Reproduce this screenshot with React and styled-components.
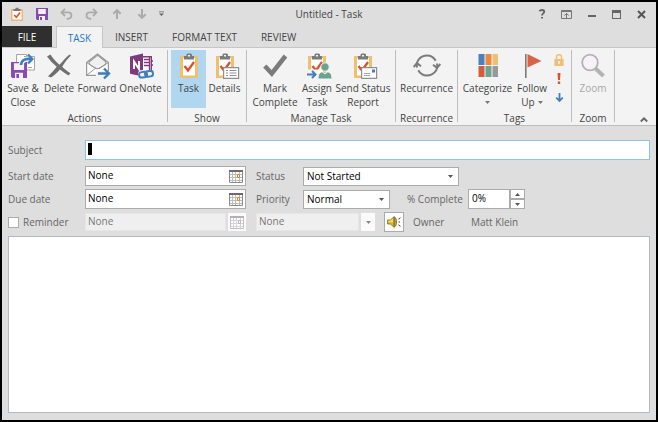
import React from "react";
import styled, { createGlobalStyle, css } from "styled-components";

const Global = createGlobalStyle`
  *, *::before, *::after { box-sizing: border-box; }
  body { margin: 0; background: #000; }
  body, button, input, select, textarea {
    font-family: "Open Sans", "Noto Sans", sans-serif;
    font-size: 10px;
    line-height: 14px;
    color: #444;
  }
  button, input, select, textarea { margin: 0; padding: 0; border-radius: 0; outline: none; }
  button { border: 0; background: transparent; }
  svg { display: block; flex: none; overflow: visible; }
`;

/* ---------- window frame ---------- */

const Window = styled.div`
  min-height: 100vh;
  display: flex;
  flex-direction: column;
  border: 2px solid #000;
  background: #dedede;
`;

const TitleBar = styled.header`
  display: grid;
  grid-template-columns: 1fr auto 1fr;
  align-items: center;
  height: 24px;
  padding: 0 2px;
`;

const Title = styled.h1`
  margin: 0;
  font-size: 10px;
  font-weight: 400;
  color: #444;
`;

const BarButtons = styled.div`
  display: flex;
  justify-content: ${(p) => (p.$end ? "flex-end" : "flex-start")};
`;

const BarButton = styled.button`
  width: ${(p) => (p.$narrow ? "14px" : "25px")};
  height: 24px;
  display: grid;
  place-items: center;
`;

/* ---------- tabs ---------- */

const Tabs = styled.nav`
  display: flex;
  height: 21px;
`;

const Tab = styled.button`
  height: 21px;
  padding: 0 12px;
  color: #444;
  ${(p) =>
    p.$kind === "file" &&
    css`
      width: 50px;
      padding: 0;
      margin-right: 4px;
      background: #2f2f2f;
      color: #fff;
    `}
  ${(p) =>
    p.$kind === "active" &&
    css`
      position: relative;
      width: 47px;
      padding: 0;
      height: 22px;
      background: #f3f3f3;
      border: 1px solid #c6c6c6;
      border-bottom: 0;
      color: #1979ca;
    `}
`;

/* ---------- ribbon ---------- */

const Ribbon = styled.section`
  display: flex;
  height: 79px;
  padding: 2px 0 3px;
  background: #f3f3f3;
  border-top: 1px solid #c6c6c6;
  border-bottom: 1px solid #bdbdbd;
`;

const Group = styled.div`
  display: flex;
  flex-direction: column;
  justify-content: space-between;
  padding: 0 3px;
  border-right: 1px solid #bdbdbd;
`;

const GroupItems = styled.div`
  display: flex;
`;

const GroupName = styled.div`
  text-align: center;
  line-height: 8px;
`;

const BigButton = styled.button`
  width: ${(p) => p.$w}px;
  height: 58px;
  padding-top: 3px;
  display: flex;
  flex-direction: column;
  align-items: center;
  line-height: 14px;
  white-space: nowrap;
  background: ${(p) => (p.$on ? "#b1d6f0" : "transparent")};
  &:disabled { color: #a8a8a8; }
`;

const BigLabel = styled.span`
  margin-top: 2px;
  display: flex;
  flex-direction: column;
  align-items: center;
`;

const LabelLine = styled.span`
  display: flex;
  align-items: center;
  gap: 3px;
  min-height: 14px;
`;

const SmallStack = styled.div`
  display: flex;
  flex-direction: column;
  width: 18px;
`;

const SmallButton = styled.button`
  height: 19px;
  display: grid;
  place-items: center;
`;

const RibbonEnd = styled.div`
  flex: 1;
  display: flex;
  align-items: flex-end;
  justify-content: flex-end;
  padding: 0 8px 0 0;
`;

/* ---------- form ---------- */

const Form = styled.form`
  flex: 1;
  display: flex;
  flex-direction: column;
  padding: 14px 6px 7px;
`;

const Row = styled.div`
  display: flex;
  align-items: center;
  height: 20px;
  margin-bottom: ${(p) => p.$gap || 3}px;
`;

const Label = styled.label`
  flex: none;
  width: ${(p) => p.$w}px;
  margin-left: ${(p) => p.$ml || 0}px;
  color: #666;
  white-space: nowrap;
`;

const Value = styled.output`
  color: #666;
`;

const SubjectBox = styled.div`
  flex: 1;
  display: flex;
  align-items: center;
  height: 20px;
  padding-left: 2px;
  background: #fff;
  border: 1px solid #92c0e0;
`;

const Caret = styled.span`
  width: 4px;
  height: 12px;
  margin-bottom: 2px;
  background: #000;
`;

const SubjectInput = styled.input`
  flex: 1;
  min-width: 0;
  height: 18px;
  border: 0;
  color: #000;
  background: transparent;
`;

const DateBox = styled.div`
  width: 161px;
  height: 20px;
  display: flex;
  background: #fff;
  border: 1px solid #ababab;
`;

const DateInput = styled.input`
  flex: 1;
  min-width: 0;
  border: 0;
  padding: 0 0 2px 2px;
  color: #000;
  background: transparent;
  &:disabled { color: #777; }
`;

const PickButton = styled.button`
  width: ${(p) => p.$w || 18}px;
  display: grid;
  place-items: center;
  &:disabled { background: #fbfbfb; }
`;

const MutedBox = styled(DateBox)`
  width: ${(p) => p.$w}px;
  height: 18px;
  margin-left: ${(p) => p.$ml || 0}px;
  gap: 2px;
  background: transparent;
  border: 0;

  ${DateInput} {
    background: #efefef;
    border: 1px solid #e6e6e6;
  }
`;

const SelectBox = styled.div`
  width: ${(p) => p.$w}px;
  height: 19px;
  display: grid;
  align-items: center;
  background: #fff;
  border: 1px solid #ababab;

  > * { grid-area: 1 / 1; }
  > svg { justify-self: end; margin-right: 5px; pointer-events: none; }
`;

const Select = styled.select`
  appearance: none;
  width: 100%;
  height: 17px;
  padding: 0 14px 0 3px;
  border: 0;
  color: #000;
  background: transparent;
`;

const Spinner = styled.div`
  display: flex;
  height: 20px;
  width: 57px;
`;

const SpinInput = styled.input`
  width: 42px;
  padding: 0 0 2px 3px;
  border: 1px solid #ababab;
  color: #000;
  background: #fff;
`;

const SpinButtons = styled.div`
  flex: 1;
  display: flex;
  flex-direction: column;
`;

const SpinButton = styled.button`
  flex: 1;
  display: grid;
  place-items: center;
  background: #fff;
  border: 1px solid #ababab;
`;

const Check = styled.input`
  appearance: none;
  width: 11px;
  height: 11px;
  margin-right: 4px;
  background: #fff;
  border: 1px solid #ababab;
`;

const SoundButton = styled.button`
  width: 20px;
  height: 20px;
  margin-left: 9px;
  display: grid;
  place-items: center;
  background: #fff;
  border: 1px solid #ababab;
`;

const Notes = styled.textarea`
  flex: 1;
  width: 100%;
  min-height: 120px;
  padding: 4px;
  resize: none;
  color: #000;
  background: #fff;
  border: 1px solid #b4bac1;
`;

/* ---------- icons ---------- */

const Floppy = ({ size = 12, x, y }) => (
  <svg width={size} height={size} x={x} y={y} viewBox="0 0 12 12">
    <path fill="#8a4bb0" d="M0 0h12v12H1L0 11z" />
    <path fill="#f6f2f9" d="M2.200 1h7.600v5H2.200zM3 8h6v4H3z" />
    <path fill="#8a4bb0" d="M4 9h2v3H4z" />
  </svg>
);

const MiniTask = () => (
  <svg width="12" height="14" viewBox="0 0 12 14">
    <path fill="#efb96d" d="M0 2h12v12H0z" />
    <path fill="#fff" d="M1.500 4h9v8.500h-9z" />
    <path fill="#777" d="M2.500 2h2V.8h3V2h2v2h-7z" />
    <path fill="none" stroke="#d9512c" strokeWidth="1.600" d="M3.200 8l2.100 2.200L9 5.500" />
  </svg>
);

const Undo = ({ flip }) => (
  <svg width="13" height="12" viewBox="0 0 13 12" fill="none" stroke="#ababab" strokeWidth="1.800">
    <g transform={flip ? "translate(13 0) scale(-1 1)" : undefined}>
      <path d="M5 .8L1.400 4.400 5 8M1.800 4.400h6.400c4.300 0 4.300 5.800.2 6.300L6.800 11" />
    </g>
  </svg>
);

const Arrow = ({ up, color = "#ababab", size = 10 }) => (
  <svg width={size} height={size} viewBox="0 0 11 11" fill="none" stroke={color} strokeWidth="2.200">
    <path d={up ? "M5.500 11V1.500M1.500 5.300l4-4 4 4" : "M5.500 0v9.500M1.500 5.700l4 4 4-4"} />
  </svg>
);

const Customize = () => (
  <svg width="5" height="6" viewBox="0 0 6 6" fill="#666">
    <path d="M0 0h6v1H0zM0 2.500h6L3 5.500z" />
  </svg>
);

const Tri = ({ up, color = "#555" }) => (
  <svg width="5" height="3" viewBox="0 0 5 3" fill={color}>
    <path d={up ? "M0 3h5L2.500 0z" : "M0 0h5L2.500 3z"} />
  </svg>
);

const Help = () => (
  <svg width="8" height="10" viewBox="0 0 8 10" fill="none" stroke="#666" strokeWidth="1.900">
    <path d="M1.400 2.200C2.400.6 6.200.4 6.200 2.800 6.200 4.400 4 4.400 4 6.600M4 7.900v1.700" />
  </svg>
);

const RibbonOptions = () => (
  <svg width="11" height="9" viewBox="0 0 11 9" fill="none" stroke="#777">
    <path d="M.5.5h10v8H.5zM.5 1.500h10M5.500 8V3.500M3.300 5.600l2.200-2.200 2.200 2.200" />
  </svg>
);

const Minimize = () => (
  <svg width="8" height="8" viewBox="0 0 8 8">
    <path fill="#666" d="M0 5h8v2H0z" />
  </svg>
);

const Maximize = () => (
  <svg width="9" height="9" viewBox="0 0 9 9">
    <path fill="#666" d="M0 0h9v9H0zM1 3v5h7V3z" fillRule="evenodd" />
  </svg>
);

const Close = () => (
  <svg width="9" height="9" viewBox="0 0 9 9" stroke="#555" strokeWidth="2">
    <path d="M1 1l7 7M8 1L1 8" />
  </svg>
);

const SaveClose = () => (
  <svg width="26" height="26" viewBox="0 0 26 26">
    <path fill="#fff" stroke="#a6a6a6" d="M6.500 1.500h10v16h-10zM14 3.500h10.500v13.500H14" />
    <path stroke="#a6a6a6" d="M18 14.500h4" />
    <Floppy size={16} x={1} y={9} />
    <path fill="none" stroke="#fff" strokeWidth="5" d="M11 11c1-4 4-5.500 10-5" />
    <path fill="none" stroke="#3f7fbf" strokeWidth="2.600" d="M11 12c.4-5 4-6.700 11-6" />
    <path fill="none" stroke="#3f7fbf" strokeWidth="2.400" d="M18 1.500L22.300 6 18 10.500" />
  </svg>
);

const DeleteIcon = () => (
  <svg width="26" height="26" viewBox="0 0 26 26" fill="#6f6f6f">
    <path d="M1 3.500L4.500 1.500C7 5.500 10 9 13.500 11.800 17 8 20 4.500 23.500 1.500L25 2.600C21.500 6 18.500 9.800 16.200 13.700 18.500 16 21 18 24.500 20.300L22.500 22.500C19.200 20.500 16.400 18.400 14 16.400 11.300 19.300 8.500 22 5 24.500L2 23.300C5.200 20.200 8 17.300 10.700 13.800 7 10.500 4 7.500 1 3.500z" />
  </svg>
);

const ForwardIcon = () => (
  <svg width="26" height="26" viewBox="-1 0 26 26">
    <path fill="#fff" stroke="#979797" strokeWidth="1.200" d="M1.600 9.500L12.500 1l10.900 8.500v12.900H1.600z" />
    <path fill="#f0f0f0" stroke="#979797" strokeWidth="1.100" d="M4 9l8-6.500h1L21 9l-.5 2.500L14 15.500h-3L4.500 11.500z" />
    <path fill="none" stroke="#979797" d="M1.600 9.500L11 15.600h3l9.400-6.100M1.600 22.300l8.900-7" />
    <path fill="none" stroke="#f3f3f3" strokeWidth="5" d="M11 20.500h13" />
    <path fill="none" stroke="#3f7fbf" strokeWidth="2.400" d="M13 20.500h11M19 15.500l5 5-5 5" />
  </svg>
);

const OneNoteIcon = () => (
  <svg width="26" height="26" viewBox="-1 0 26 26">
    <path fill="#fff" stroke="#80397b" strokeWidth="1.400" d="M13 3.700h9.300V19H13z" />
    <path stroke="#80397b" strokeWidth="1.300" d="M15 6.500h5M15 9.500h5M15 12.500h5M20.500 4v14M22.500 8H24M22.500 12H24" />
    <path fill="#80397b" d="M1 3.500L14 .5v23L1 20.700z" />
    <path fill="none" stroke="#fff" strokeWidth="1.900" d="M5 16V8.500L10 16V8" />
    <rect x="9" y="17" width="16" height="9" rx="4" fill="#f3f3f3" />
    <g fill="none" stroke="#3f7fbf" strokeWidth="2" transform="rotate(-8 17 21)">
      <rect x="10" y="18.500" width="8" height="5.500" rx="2.700" />
      <rect x="16" y="18.500" width="8" height="5.500" rx="2.700" />
    </g>
  </svg>
);

const ClipboardShape = () => (
  <>
    <path fill="#f0c06f" d="M4 3h18v22H4z" />
    <path fill="#fff" d="M7 5h12v17.500H7z" />
    <path fill="#7b7b7b" d="M8 3h2.500V1.500L11.500.500h3.500l1 1V3h2v3.500H8z" />
    <path fill="#f3f3f3" d="M12 2h2v1.500h-2z" />
    <path fill="none" stroke="#d9512c" strokeWidth="2.300" d="M8.500 13l3.500 4.500 6-8.500" />
  </>
);

const TaskIcon = () => (
  <svg width="26" height="26" viewBox="0 0 26 26"><ClipboardShape /></svg>
);

const DetailsIcon = () => (
  <svg width="26" height="26" viewBox="-2 0 26 26">
    <g transform="translate(-2 0)"><ClipboardShape /></g>
    <path fill="#fff" stroke="#8f8f8f" strokeWidth="1.200" d="M9.600 14.600h15v10.800h-15z" />
    <path stroke="#929292" d="M12 17.500h2M15.500 17.500h7M12 20h2M15.500 20h7M12 22.500h2M15.500 22.500h7" />
  </svg>
);

const CheckIcon = () => (
  <svg width="26" height="26" viewBox="0 0 26 26">
    <path fill="none" stroke="#7b7b7b" strokeWidth="4.500" d="M2.800 13l7 7.500L23.500 3" />
  </svg>
);

const AssignIcon = () => (
  <svg width="26" height="26" viewBox="-2 0 26 26">
    <g transform="translate(-2 0)"><ClipboardShape /></g>
    <path fill="#f3f3f3" d="M0 16.500h12V26H0z" />
    <g fill="#68a490" stroke="#f3f3f3">
      <circle cx="19" cy="14" r="4.200" />
      <path d="M12 26c0-5 2-7 4.500-7l2.500 2 2.500-2c2.500 0 4.500 2 4.500 7z" />
    </g>
    <path fill="none" stroke="#3f7fbf" strokeWidth="2" d="M1 21.500h8M6 18l3.500 3.500L6 25" />
  </svg>
);

const SendIcon = () => (
  <svg width="26" height="26" viewBox="-2 0 26 26">
    <g transform="translate(-2 0)"><ClipboardShape /></g>
    <path fill="#fff" stroke="#8f8f8f" strokeWidth="1.200" d="M9.600 14.600h15v10.800h-15z" />
    <path fill="#3f7fbf" d="M20 16.500h3v3h-3z" />
    <path stroke="#a5a5a5" d="M12 20.500h6M12 22.500h6" />
  </svg>
);

const RecurrenceIcon = () => (
  <svg width="26" height="26" viewBox="0 0 26 26" fill="none" stroke="#7b7b7b" strokeWidth="2">
    <path d="M3 14.500C1.500 7.500 7 2.500 13 2.500c4 0 7 2 8.700 5.200M23 10.500C24.500 17.500 19 22.500 13 22.500c-4 0-7-2-8.700-5.200" />
    <path d="M-.3 14l3.300-3.800 4 3M26.300 11L23 14.800l-4-3" />
  </svg>
);

const CategorizeIcon = () => (
  <svg width="26" height="26" viewBox="0 0 26 26">
    <path fill="#4a80bd" d="M3.500 1h6v11h-6z" />
    <path fill="#ec8840" d="M10.500 1h6v11h-6z" />
    <path fill="#eebf74" d="M17.500 1h5.500v11h-5.500z" />
    <path fill="#d65c3f" d="M3.500 13h6v11h-6z" />
    <path fill="#6ba592" d="M10.500 13h6v11h-6z" />
    <path fill="#999" d="M17.500 13h5.500v11h-5.500z" />
  </svg>
);

const FlagIcon = () => (
  <svg width="26" height="26" viewBox="0 0 26 26">
    <path fill="#7b7b7b" d="M6 1h1.600v24H6z" />
    <path fill="#dc6245" d="M8.500 1l14 7-14 6.500z" />
  </svg>
);

const LockIcon = () => (
  <svg width="10" height="12" viewBox="0 0 10 13">
    <path fill="none" stroke="#eebf74" strokeWidth="1.600" d="M2.300 6V3c0-3 5.400-3 5.400 0v3" />
    <path fill="#eebf74" d="M0 5.500h10V13H0z" />
    <path fill="#fff" d="M4.200 7.500h1.600v3H4.200z" />
  </svg>
);

const ImportantIcon = () => (
  <svg width="4" height="11" viewBox="0 0 4 11" fill="#dc5334">
    <path d="M.5 0h3L3 7H1zM.8 8.500h2.400V11H.8z" />
  </svg>
);

const ZoomIcon = () => (
  <svg width="26" height="26" viewBox="0 0 26 26">
    <path stroke="#b3b3b3" strokeWidth="4" d="M15.500 15.500l8 7.500" />
    <circle cx="10" cy="9.500" r="7.800" fill="#f7f2f8" stroke="#b3b3b3" strokeWidth="1.800" />
  </svg>
);

const Chevron = () => (
  <svg width="8" height="5" viewBox="0 0 8 5" fill="none" stroke="#666" strokeWidth="1.900">
    <path d="M.8 4.500L4 1.300l3.200 3.200" />
  </svg>
);

const Calendar = ({ muted }) => (
  <svg width="14" height="13" viewBox="0 0 14 13">
    <path fill="#fff" stroke={muted ? "#c4bfc6" : "#8a8a8a"} d="M.5.5h13v12H.5z" />
    <path fill={muted ? "#b5b0b7" : "#6b6b6b"} d="M0 0h14v2H0z" />
    <path stroke={muted ? "#d8d3da" : "#bcbcbc"} d="M3.500 2v10M6.500 2v10M10.500 2v10M1 4.500h12M1 7.500h12M1 10.500h12" />
    <path fill="#fff" stroke={muted ? "#c2b4c6" : "#e8842c"} d="M8.500 4.500h2v3h-2z" />
  </svg>
);

const Speaker = () => (
  <svg width="14" height="12" viewBox="0 0 14 12">
    <path fill="#d9b53c" stroke="#8a6d1c" strokeWidth=".8" d="M.5 4h2.800L7 .8v10.400L3.300 8H.5z" />
    <path fill="#f4de82" d="M1.500 4.700h2.200L6 2.500v4L1.500 6z" />
    <path fill="#c9a231" stroke="#7a6120" strokeWidth=".8" d="M7.300.8c3 1.500 3 8.900 0 10.400z" />
    <path fill="none" stroke="#444" d="M11.500 3.200l2-1.500M11.500 6H13M11.500 8.800l2 1.500" />
  </svg>
);

/* ---------- composition ---------- */

const Big = ({ icon, lines, arrow, ...rest }) => (
  <BigButton type="button" {...rest}>
    {icon}
    <BigLabel>
      {lines.map((t, i) => (
        <LabelLine key={i}>
          {t}
          {arrow && i === lines.length - 1 && <Tri color="#777" />}
        </LabelLine>
      ))}
    </BigLabel>
  </BigButton>
);

const RibbonGroup = ({ name, children }) => (
  <Group role="group" aria-label={name}>
    <GroupItems>{children}</GroupItems>
    <GroupName>{name}</GroupName>
  </Group>
);

const DateField = ({ id, label }) => (
  <DateBox>
    <DateInput id={id} defaultValue="None" />
    <PickButton type="button" aria-label={`Pick ${label}`}><Calendar /></PickButton>
  </DateBox>
);

export default function App() {
  return (
    <>
      <Global />
      <Window>
        <TitleBar>
          <BarButtons>
            <BarButton aria-label="Task"><MiniTask /></BarButton>
            <BarButton aria-label="Save"><Floppy /></BarButton>
            <BarButton aria-label="Undo"><Undo /></BarButton>
            <BarButton aria-label="Redo"><Undo flip /></BarButton>
            <BarButton aria-label="Previous item"><Arrow up /></BarButton>
            <BarButton aria-label="Next item"><Arrow /></BarButton>
            <BarButton $narrow aria-label="Customize toolbar"><Customize /></BarButton>
          </BarButtons>
          <Title>Untitled - Task</Title>
          <BarButtons $end>
            <BarButton aria-label="Help"><Help /></BarButton>
            <BarButton aria-label="Ribbon display options"><RibbonOptions /></BarButton>
            <BarButton aria-label="Minimize"><Minimize /></BarButton>
            <BarButton aria-label="Maximize"><Maximize /></BarButton>
            <BarButton aria-label="Close"><Close /></BarButton>
          </BarButtons>
        </TitleBar>

        <Tabs>
          <Tab $kind="file">FILE</Tab>
          <Tab $kind="active">TASK</Tab>
          <Tab>INSERT</Tab>
          <Tab>FORMAT TEXT</Tab>
          <Tab>REVIEW</Tab>
        </Tabs>

        <Ribbon>
          <RibbonGroup name="Actions">
            <Big $w={36} icon={<SaveClose />} lines={["Save &", "Close"]} />
            <Big $w={36} icon={<DeleteIcon />} lines={["Delete"]} />
            <Big $w={40} icon={<ForwardIcon />} lines={["Forward"]} />
            <Big $w={47} icon={<OneNoteIcon />} lines={["OneNote"]} />
          </RibbonGroup>
          <RibbonGroup name="Show">
            <Big $w={35} $on icon={<TaskIcon />} lines={["Task"]} aria-pressed="true" />
            <Big $w={37} icon={<DetailsIcon />} lines={["Details"]} />
          </RibbonGroup>
          <RibbonGroup name="Manage Task">
            <Big $w={50} icon={<CheckIcon />} lines={["Mark", "Complete"]} />
            <Big $w={34} icon={<AssignIcon />} lines={["Assign", "Task"]} />
            <Big $w={58} icon={<SendIcon />} lines={["Send Status", "Report"]} />
          </RibbonGroup>
          <RibbonGroup name="Recurrence">
            <Big $w={55} icon={<RecurrenceIcon />} lines={["Recurrence"]} />
          </RibbonGroup>
          <RibbonGroup name="Tags">
            <Big $w={53} arrow icon={<CategorizeIcon />} lines={["Categorize", ""]} />
            <Big $w={36} arrow icon={<FlagIcon />} lines={["Follow", "Up"]} />
            <SmallStack>
              <SmallButton aria-label="Private"><LockIcon /></SmallButton>
              <SmallButton aria-label="High importance"><ImportantIcon /></SmallButton>
              <SmallButton aria-label="Low importance"><Arrow color="#3f7fbf" size={9} /></SmallButton>
            </SmallStack>
          </RibbonGroup>
          <RibbonGroup name="Zoom">
            <Big $w={36} disabled icon={<ZoomIcon />} lines={["Zoom"]} />
          </RibbonGroup>
          <RibbonEnd>
            <button type="button" aria-label="Collapse the ribbon"><Chevron /></button>
          </RibbonEnd>
        </Ribbon>

        <Form>
          <Row $gap={6}>
            <Label $w={77} htmlFor="subject">Subject</Label>
            <SubjectBox>
              <Caret />
              <SubjectInput id="subject" />
            </SubjectBox>
          </Row>
          <Row>
            <Label $w={77} htmlFor="start">Start date</Label>
            <DateField id="start" label="start date" />
            <Label $w={47} $ml={10} htmlFor="status">Status</Label>
            <SelectBox $w={156}>
              <Select id="status"><option>Not Started</option></Select>
              <Tri />
            </SelectBox>
          </Row>
          <Row>
            <Label $w={77} htmlFor="due">Due date</Label>
            <DateField id="due" label="due date" />
            <Label $w={47} $ml={10} htmlFor="priority">Priority</Label>
            <SelectBox $w={87}>
              <Select id="priority"><option>Normal</option></Select>
              <Tri />
            </SelectBox>
            <Label $w={61} $ml={17} htmlFor="complete">% Complete</Label>
            <Spinner>
              <SpinInput id="complete" defaultValue="0%" />
              <SpinButtons>
                <SpinButton type="button" aria-label="Increase"><Tri up /></SpinButton>
                <SpinButton type="button" aria-label="Decrease"><Tri /></SpinButton>
              </SpinButtons>
            </Spinner>
          </Row>
          <Row $gap={4}>
            <Check type="checkbox" id="reminder" />
            <Label $w={62} htmlFor="reminder">Reminder</Label>
            <MutedBox $w={161}>
              <DateInput aria-label="Reminder date" defaultValue="None" disabled />
              <PickButton type="button" disabled aria-label="Pick reminder date"><Calendar muted /></PickButton>
            </MutedBox>
            <MutedBox $w={119} $ml={10}>
              <DateInput aria-label="Reminder time" defaultValue="None" disabled />
              <PickButton $w={14} type="button" disabled aria-label="Pick reminder time"><Tri color="#888" /></PickButton>
            </MutedBox>
            <SoundButton type="button" aria-label="Reminder sound"><Speaker /></SoundButton>
            <Label $w={58} $ml={9} htmlFor="owner">Owner</Label>
            <Value id="owner">Matt Klein</Value>
          </Row>
          <Notes aria-label="Task notes" />
        </Form>
      </Window>
    </>
  );
}
